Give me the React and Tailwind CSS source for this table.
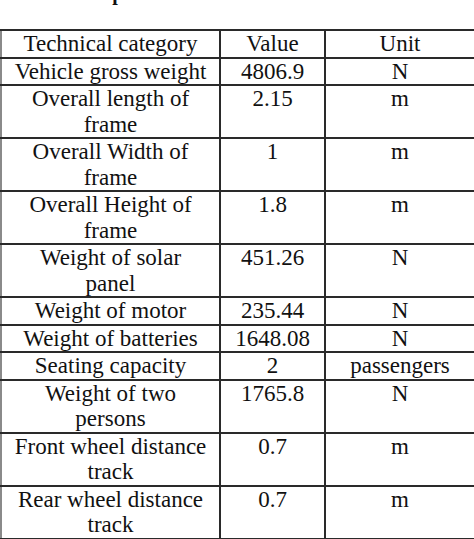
import React from "react";

const rows = [
  [["Vehicle gross weight"], "4806.9", "N"],
  [["Overall length of", "frame"], "2.15", "m"],
  [["Overall Width of", "frame"], "1", "m"],
  [["Overall Height of", "frame"], "1.8", "m"],
  [["Weight of solar", "panel"], "451.26", "N"],
  [["Weight of motor"], "235.44", "N"],
  [["Weight of batteries"], "1648.08", "N"],
  [["Seating capacity"], "2", "passengers"],
  [["Weight of two", "persons"], "1765.8", "N"],
  [["Front wheel distance", "track"], "0.7", "m"],
  [["Rear wheel distance", "track"], "0.7", "m"],
];

export default function App() {
  return (
    <div
      className="w-[474px] h-[539px] overflow-hidden bg-white text-[#111]"
      style={{ fontFamily: '"Liberation Serif", "Times New Roman", serif' }}
    >
      <div className="h-[29px] overflow-hidden">
        <div className="mt-[-17px] pl-[34px] text-[20px] leading-[20px] font-bold whitespace-nowrap">
          Table 1 Specifications of vehicle
        </div>
      </div>
      <table className="table-fixed border-collapse w-[474px] text-[23px] leading-[25.5px]">
        <colgroup>
          <col className="w-[219px]" />
          <col className="w-[105px]" />
          <col className="w-[150px]" />
        </colgroup>
        <tbody>
          <tr>
            <td className="border-2 border-[#2a2a2a] border-l-[#8a8a8a] text-center align-top p-0">Technical category</td>
            <td className="border-2 border-[#2a2a2a] text-center align-top p-0">Value</td>
            <td className="border-2 border-[#2a2a2a] border-r-[#555] text-center align-top p-0">Unit</td>
          </tr>
          {rows.map(([cat, val, unit], i) => (
            <tr key={i}>
              <td className="border-2 border-[#2a2a2a] border-l-[#8a8a8a] text-center align-top p-0 whitespace-nowrap">
                {cat.map((l, j) => (
                  <div key={j}>{l}</div>
                ))}
              </td>
              <td className="border-2 border-[#2a2a2a] text-center align-top p-0">{val}</td>
              <td className="border-2 border-[#2a2a2a] border-r-[#555] text-center align-top p-0">{unit}</td>
            </tr>
          ))}
        </tbody>
      </table>
    </div>
  );
}
